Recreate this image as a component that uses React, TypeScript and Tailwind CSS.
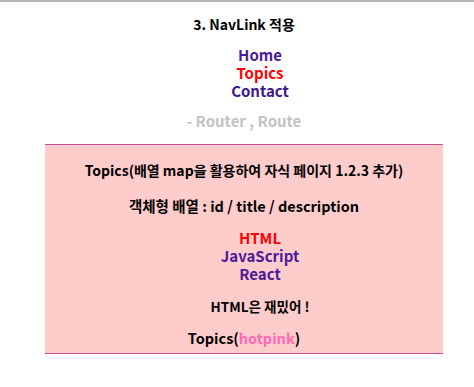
import React from "react";

export default function App() {
  const font = { fontFamily: '"Noto Sans CJK KR", "Noto Sans", sans-serif' };
  return (
    <div className="w-[474px] h-[387px] bg-white overflow-hidden" style={font}>
      <div className="h-[2px] bg-[#b4b4b4]" />
      <div className="ml-[45px] w-[398px] flex flex-col items-center font-bold text-center">
        <div className="mt-[12px] text-[14px] leading-[20px] text-black">3. NavLink 적용</div>
        <ul className="mt-[12px] pl-[32px] flex flex-col items-center text-[15px] leading-[18px]">
          <li className="text-[#4b1a99]">Home</li>
          <li className="text-[#ff0000]">Topics</li>
          <li className="text-[#3d1a8c]">Contact</li>
        </ul>
        <div className="mt-[11px] text-[15px] leading-[20px] text-[#c2c2c2]">- Router , Route</div>
      </div>
      <div className="mt-[13px] ml-[45px] w-[398px] h-[210px] bg-[#ffcccc] border-y border-y-[#cc4f95] flex flex-col items-center font-bold text-center">
        <div className="mt-[15px] text-[14px] leading-[20px] text-black">Topics(배열 map을 활용하여 자식 페이지 1.2.3 추가)</div>
        <div className="mt-[16px] text-[14.5px] leading-[20px] text-black">객체형 배열 : id / title / description</div>
        <ul className="mt-[13px] pl-[32px] flex flex-col items-center text-[15px] leading-[18px]">
          <li className="text-[#ff0000]">HTML</li>
          <li className="text-[#4b1a99]">JavaScript</li>
          <li className="text-[#4b1a99]">React</li>
        </ul>
        <div className="mt-[13px] text-[13.5px] leading-[20px] text-black pl-[32px]">HTML은 재밌어 !</div>
        <div className="mt-[12px] text-[14.5px] leading-[20px] text-black">
          Topics(<span className="text-[#ff69b4]">hotpink</span>)
        </div>
      </div>
    </div>
  );
}
